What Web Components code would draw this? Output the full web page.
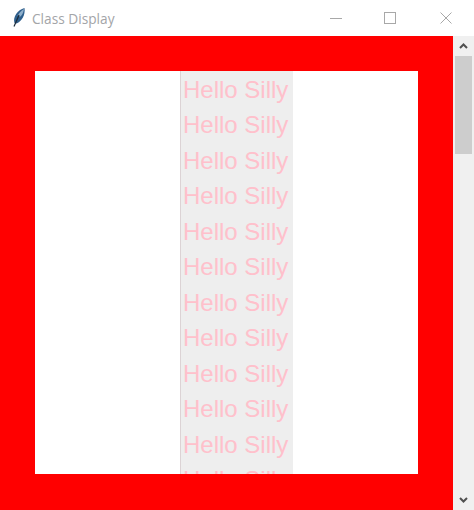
<!DOCTYPE html>
<html>
<head>
<meta charset="utf-8">
<title>Class Display</title>
<style>
    html, body { margin: 0; height: 100%; overflow: hidden; background: #fff; }
</style>
</head>
<body>
<app-window title="Class Display">
    <silly-list count="12"></silly-list>
</app-window>
<script>
class TitleBar extends HTMLElement {
    connectedCallback() {
        const shadow = this.shadowRoot || this.attachShadow({mode: 'open'});
        shadow.innerHTML = `
            <style>
                :host { display: flex; align-items: center; height: 36px; padding-right: 1px; box-sizing: border-box; background: #fff; flex: none; }
                svg { display: block; }
                .feather { margin-left: 11px; }
                .title { flex: 1; margin-left: 6px; padding-top: 1px; font: 13.7px "Open Sans", sans-serif; color: #a3a5a8; }
                .btn { width: 54px; height: 36px; display: flex; align-items: center; justify-content: center; }
                .btn:last-child { margin-left: 2px; }
            </style>
            <svg class="feather" width="15" height="22" viewBox="0 0 15 22">
                <path d="M3.500 16C1.500 10 6.500 3 13.500 1C14.500 8 11 14 5.500 16.500Z" fill="#2f5f8c"/>
                <path d="M6.500 9C7.500 6.500 10 4 13 2C12.500 5 11.500 7.500 9.500 9.500Z" fill="#8fb0cc"/>
                <path d="M3 19.500L8 8" stroke="#1c2b3a" stroke-width="1.2" fill="none"/>
            </svg>
            <span class="title">${this.getAttribute('label') || ''}</span>
            <span class="btn"><svg width="12" height="12" viewBox="0 0 12 12"><path d="M0 6.500H12" stroke="#a8a8a8"/></svg></span>
            <span class="btn"><svg width="12" height="12" viewBox="0 0 12 12"><rect x=".5" y=".5" width="11" height="11" fill="none" stroke="#a8a8a8"/></svg></span>
            <span class="btn"><svg width="12" height="12" viewBox="0 0 12 12"><path d="M.5 .5L11.500 11.500M11.500 .5L.5 11.500" stroke="#a8a8a8"/></svg></span>
        `;
    }
}

class ScrollBar extends HTMLElement {
    connectedCallback() {
        const shadow = this.shadowRoot || this.attachShadow({mode: 'open'});
        shadow.innerHTML = `
            <style>
                :host { display: flex; flex-direction: column; width: 21px; background: #f0f0f0; flex: none; padding: 0 2px; box-sizing: border-box; border-right: 0; }
                .arrow { height: 20px; display: flex; align-items: center; justify-content: center; flex: none; }
                .track { flex: 1; }
                .thumb { height: 98px; background: #cdcdcd; }
                svg { display: block; }
            </style>
            <div class="arrow"><svg width="9" height="6" viewBox="0 0 9 6"><path d="M1 5L4.500 1.500L8 5" fill="none" stroke="#505050" stroke-width="2"/></svg></div>
            <div class="track"><div class="thumb"></div></div>
            <div class="arrow"><svg width="9" height="6" viewBox="0 0 9 6"><path d="M1 1L4.500 4.500L8 1" fill="none" stroke="#505050" stroke-width="2"/></svg></div>
        `;
    }
}

class SillyList extends HTMLElement {
    connectedCallback() {
        const shadow = this.shadowRoot || this.attachShadow({mode: 'open'});
        const count = Number(this.getAttribute('count')) || 1;
        shadow.innerHTML = `
            <style>
                :host { display: block; height: 100%; overflow: hidden; background: #fff; }
                .col { width: 113px; margin-left: 145px; padding-top: .5px; box-sizing: border-box; height: 100%; overflow: hidden; background: #eeeeee; border-left: 1px solid #dcd3d5; }
                .row { height: 35.5px; padding-left: 2px; font: 24px/35.5px "Liberation Sans", Arial, sans-serif; color: #ffc0cb; white-space: nowrap; }
            </style>
            <div class="col">${'<div class="row">Hello Silly</div>'.repeat(count)}</div>
        `;
    }
}

class AppWindow extends HTMLElement {
    connectedCallback() {
        const shadow = this.shadowRoot || this.attachShadow({mode: 'open'});
        shadow.innerHTML = `
            <style>
                :host { display: flex; flex-direction: column; width: 474px; height: 510px; }
                .body { flex: 1; display: flex; min-height: 0; }
                .frame { flex: 1; background: #ff0000; padding: 35px 35px 36px; min-width: 0; box-sizing: border-box; }
            </style>
            <title-bar label="${this.getAttribute('title') || ''}"></title-bar>
            <div class="body">
                <div class="frame"><slot></slot></div>
                <scroll-bar></scroll-bar>
            </div>
        `;
    }
}

customElements.define('title-bar', TitleBar);
customElements.define('scroll-bar', ScrollBar);
customElements.define('silly-list', SillyList);
customElements.define('app-window', AppWindow);
</script>
</body>
</html>
